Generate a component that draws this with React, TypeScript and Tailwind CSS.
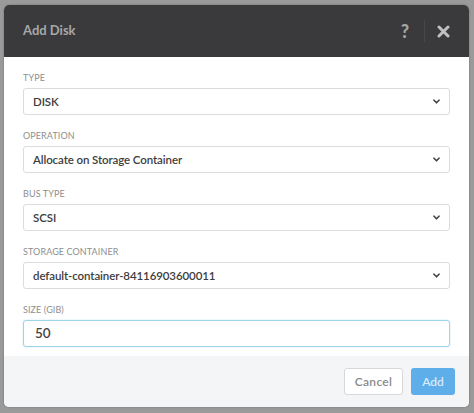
import React from "react";

function Chevron() {
  return (
    <svg width="7" height="5" viewBox="0 0 7 5" className="shrink-0">
      <path d="M1 1.2 L3.5 3.8 L6 1.2" fill="none" stroke="#444" strokeWidth="1.6" strokeLinecap="round" strokeLinejoin="round" />
    </svg>
  );
}

function SelectField({ label, value }: { label: string; value: string }) {
  return (
    <div className="flex flex-col pb-[15px]">
      <div className="text-[9px] leading-[12px] uppercase tracking-[0.1px] text-[#8e8e8e]">{label}</div>
      <div className="mt-[4px] h-[27px] flex items-center justify-between pl-[9px] pr-[9px] border border-[#dcdcdc] rounded-[3px] bg-white">
        <span className="text-[11.5px] font-semibold text-[#3d3d3d] tracking-[-0.1px]">{value}</span>
        <Chevron />
      </div>
    </div>
  );
}

export default function App() {
  return (
    <div className="w-[474px] h-[413px] bg-[#9a9a9a] pt-[5px] pl-[4px] pr-[5px] overflow-hidden" style={{ fontFamily: "Lato, 'Open Sans', sans-serif" }}>
      <div className="w-[465px] h-[402px] rounded-[5px] overflow-hidden bg-white flex flex-col shadow-[0_0_2px_rgba(0,0,0,0.3)]">
        <div className="h-[52px] bg-[#3a3a3c] flex items-center pl-[19px] pr-[19px] shrink-0">
          <div className="text-[13px] font-bold text-[#a8a8a8] flex-1">Add Disk</div>
          <div className="text-[18px] font-black text-[#a4a4a4] w-[20px] text-center">?</div>
          <div className="w-px h-[22px] bg-[#48484a] ml-[9px] mr-[12px]" />
          <svg width="13" height="13" viewBox="0 0 13 13">
            <path d="M2 2 L11 11 M11 2 L2 11" stroke="#c0c0c0" strokeWidth="3" strokeLinecap="round" />
          </svg>
        </div>
        <div className="px-[19px] pt-[15px] flex flex-col">
          <SelectField label="Type" value="DISK" />
          <SelectField label="Operation" value="Allocate on Storage Container" />
          <SelectField label="Bus Type" value="SCSI" />
          <SelectField label="Storage Container" value="default-container-84116903600011" />
          <div className="flex flex-col pb-[9px]">
            <div className="text-[9px] leading-[12px] uppercase tracking-[0.1px] text-[#8e8e8e]">Size (GiB)</div>
            <div className="mt-[4px] h-[27px] flex items-center pl-[11px] border border-[#9fd3ea] rounded-[3px] bg-white shadow-[0_0_2px_rgba(120,190,230,0.4)]">
              <span className="text-[13.5px] font-semibold text-[#444]">50</span>
            </div>
          </div>
        </div>
        <div className="flex-1 bg-[#f4f5f6] flex items-center justify-end pr-[14px] gap-[8px]">
          <div className="w-[59px] h-[27px] border border-[#d8d8d8] rounded-[3px] bg-white flex items-center justify-center text-[12px] font-semibold text-[#8a8a8a] tracking-[0.3px]">Cancel</div>
          <div className="w-[44px] h-[27px] rounded-[3px] bg-[#5eaeea] flex items-center justify-center text-[12px] font-semibold text-[#d9ecfa]">Add</div>
        </div>
      </div>
    </div>
  );
}
